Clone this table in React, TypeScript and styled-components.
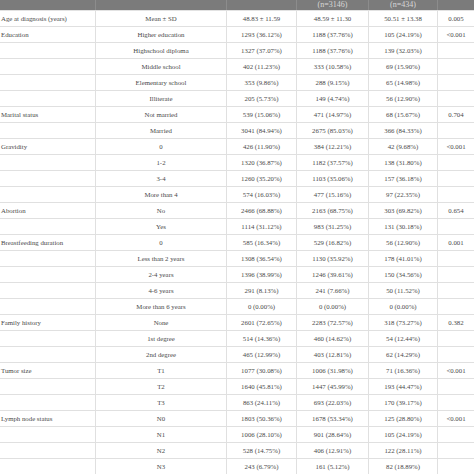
import * as React from "react";
import styled, { createGlobalStyle } from "styled-components";

const GlobalStyle = createGlobalStyle`
  html, body {
    margin: 0;
    padding: 0;
    background: #ffffff;
    overflow: hidden;
  }
`;

const COLS = "96px 131px 70px 72px 69px 36px";

type RowData = {
  label?: string;
  group: string;
  total: string;
  a: string;
  b: string;
  p?: string;
};

const rows: RowData[] = [
  { label: "Age at diagnosis (years)", group: "Mean ± SD", total: "48.83 ± 11.59", a: "48.59 ± 11.30", b: "50.51 ± 13.38", p: "0.005" },
  { label: "Education", group: "Higher education", total: "1293 (36.12%)", a: "1188 (37.76%)", b: "105 (24.19%)", p: "<0.001" },
  { group: "Highschool diploma", total: "1327 (37.07%)", a: "1188 (37.76%)", b: "139 (32.03%)" },
  { group: "Middle school", total: "402 (11.23%)", a: "333 (10.58%)", b: "69 (15.90%)" },
  { group: "Elementary school", total: "353 (9.86%)", a: "288 (9.15%)", b: "65 (14.98%)" },
  { group: "Illiterate", total: "205 (5.73%)", a: "149 (4.74%)", b: "56 (12.90%)" },
  { label: "Marital status", group: "Not married", total: "539 (15.06%)", a: "471 (14.97%)", b: "68 (15.67%)", p: "0.704" },
  { group: "Married", total: "3041 (84.94%)", a: "2675 (85.03%)", b: "366 (84.33%)" },
  { label: "Gravidity", group: "0", total: "426 (11.90%)", a: "384 (12.21%)", b: "42 (9.68%)", p: "<0.001" },
  { group: "1-2", total: "1320 (36.87%)", a: "1182 (37.57%)", b: "138 (31.80%)" },
  { group: "3-4", total: "1260 (35.20%)", a: "1103 (35.06%)", b: "157 (36.18%)" },
  { group: "More than 4", total: "574 (16.03%)", a: "477 (15.16%)", b: "97 (22.35%)" },
  { label: "Abortion", group: "No", total: "2466 (68.88%)", a: "2163 (68.75%)", b: "303 (69.82%)", p: "0.654" },
  { group: "Yes", total: "1114 (31.12%)", a: "983 (31.25%)", b: "131 (30.18%)" },
  { label: "Breastfeeding duration", group: "0", total: "585 (16.34%)", a: "529 (16.82%)", b: "56 (12.90%)", p: "0.001" },
  { group: "Less than 2 years", total: "1308 (36.54%)", a: "1130 (35.92%)", b: "178 (41.01%)" },
  { group: "2-4 years", total: "1396 (38.99%)", a: "1246 (39.61%)", b: "150 (34.56%)" },
  { group: "4-6 years", total: "291 (8.13%)", a: "241 (7.66%)", b: "50 (11.52%)" },
  { group: "More than 6 years", total: "0 (0.00%)", a: "0 (0.00%)", b: "0 (0.00%)" },
  { label: "Family history", group: "None", total: "2601 (72.65%)", a: "2283 (72.57%)", b: "318 (73.27%)", p: "0.382" },
  { group: "1st degree", total: "514 (14.36%)", a: "460 (14.62%)", b: "54 (12.44%)" },
  { group: "2nd degree", total: "465 (12.99%)", a: "403 (12.81%)", b: "62 (14.29%)" },
  { label: "Tumor size", group: "T1", total: "1077 (30.08%)", a: "1006 (31.98%)", b: "71 (16.36%)", p: "<0.001" },
  { group: "T2", total: "1640 (45.81%)", a: "1447 (45.99%)", b: "193 (44.47%)" },
  { group: "T3", total: "863 (24.11%)", a: "693 (22.03%)", b: "170 (39.17%)" },
  { label: "Lymph node status", group: "N0", total: "1803 (50.36%)", a: "1678 (53.34%)", b: "125 (28.80%)", p: "<0.001" },
  { group: "N1", total: "1006 (28.10%)", a: "901 (28.64%)", b: "105 (24.19%)" },
  { group: "N2", total: "528 (14.75%)", a: "406 (12.91%)", b: "122 (28.11%)" },
  { group: "N3", total: "243 (6.79%)", a: "161 (5.12%)", b: "82 (18.89%)" },
];

const Table = styled.div`
  width: 474px;
  font-family: "Liberation Serif", "Times New Roman", serif;
  color: #4a4a4a;
`;

const HeaderRow = styled.div`
  display: grid;
  grid-template-columns: ${COLS};
  height: 10px;
  background: #7b7b7b;
  overflow: hidden;
  border-bottom: 1px solid #e2e2e2;
`;

const HeaderCell = styled.div<{ $last?: boolean }>`
  display: flex;
  align-items: flex-end;
  justify-content: center;
  font-size: 8px;
  line-height: 8px;
  color: #d8d8d8;
  border-right: ${(p) => (p.$last ? "none" : "1px solid #8c8c8c")};
  padding-bottom: 1px;
`;

const Row = styled.div`
  display: grid;
  grid-template-columns: ${COLS};
  height: 16px;
  box-sizing: border-box;
  border-bottom: 1.5px solid #e0e0e0;
`;

const Cell = styled.div<{ $align?: "left" | "center"; $last?: boolean }>`
  display: flex;
  align-items: center;
  justify-content: ${(p) => (p.$align === "left" ? "flex-start" : "center")};
  padding-left: ${(p) => (p.$align === "left" ? "1px" : "0")};
  font-size: 6.8px;
  white-space: nowrap;
  overflow: hidden;
  border-right: ${(p) => (p.$last ? "none" : "1px solid #e0e0e0")};
`;

const App = () => {
  return (
    <Table>
      <GlobalStyle />
      <HeaderRow>
        <HeaderCell />
        <HeaderCell />
        <HeaderCell />
        <HeaderCell>(n=3146)</HeaderCell>
        <HeaderCell>(n=434)</HeaderCell>
        <HeaderCell $last />
      </HeaderRow>
      {rows.map((r, i) => (
        <Row key={i}>
          <Cell $align="left">{r.label ?? ""}</Cell>
          <Cell>{r.group}</Cell>
          <Cell>{r.total}</Cell>
          <Cell>{r.a}</Cell>
          <Cell>{r.b}</Cell>
          <Cell $last>{r.p ?? ""}</Cell>
        </Row>
      ))}
    </Table>
  );
};

export default App;
